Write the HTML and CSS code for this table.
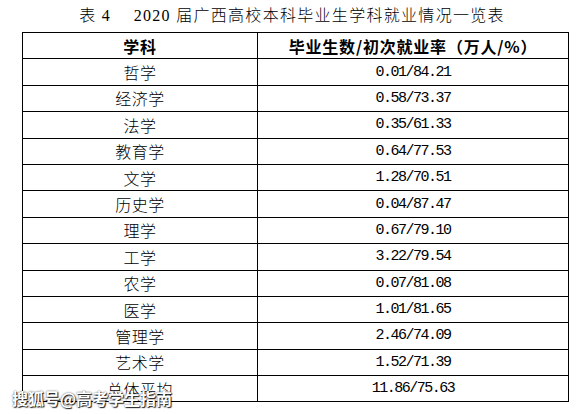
FILE: index.html
```html
<!DOCTYPE html>
<html lang="zh-CN">
<head>
  <meta charset="UTF-8">
  <meta name="viewport" content="width=device-width, initial-scale=1.0">
  <title>2020届广西高校本科毕业生学科就业情况一览表</title>
  <link rel="stylesheet" href="styles.css">
</head>
<body>
  <div class="page">
    <h1 class="title">表 4&emsp; 2020 届广西高校本科毕业生学科就业情况一览表</h1>

    <table class="grid">
      <tr class="head">
        <th class="subject">学科</th>
        <th>毕业生数/初次就业率（万人/%）</th>
      </tr>
      <tr><td class="subject">哲学</td><td class="num">0.01/84.21</td></tr>
      <tr><td class="subject">经济学</td><td class="num">0.58/73.37</td></tr>
      <tr><td class="subject">法学</td><td class="num">0.35/61.33</td></tr>
      <tr><td class="subject">教育学</td><td class="num">0.64/77.53</td></tr>
      <tr><td class="subject">文学</td><td class="num">1.28/70.51</td></tr>
      <tr><td class="subject">历史学</td><td class="num">0.04/87.47</td></tr>
      <tr><td class="subject">理学</td><td class="num">0.67/79.10</td></tr>
      <tr><td class="subject">工学</td><td class="num">3.22/79.54</td></tr>
      <tr><td class="subject">农学</td><td class="num">0.07/81.08</td></tr>
      <tr><td class="subject">医学</td><td class="num">1.01/81.65</td></tr>
      <tr><td class="subject">管理学</td><td class="num">2.46/74.09</td></tr>
      <tr><td class="subject">艺术学</td><td class="num">1.52/71.39</td></tr>
      <tr><td class="subject">总体平均</td><td class="num">11.86/75.63</td></tr>
    </table>

    <div class="watermark">搜狐号@高考学生指南</div>
  </div>
</body>
</html>
```

FILE: styles.css
```css
    body {
      margin: 0;
      background: #fff;
      color: #000;
      font-family: "Liberation Serif", "Noto Sans CJK SC", serif;
    }
    .page {
      position: relative;
      width: 584px;
      height: 414px;
      overflow: hidden;
    }
    .title {
      margin: 0;
      height: 32px;
      line-height: 31px;
      font-size: 16px;
      font-weight: 300;
      letter-spacing: 1.3px;
      text-align: center;
    }
    .grid {
      margin-left: 22px;
      width: 547px;
      border-collapse: collapse;
    }
    .grid th,
    .grid td {
      height: 26.4px;
      padding: 0;
      border: 1px solid #000;
      text-align: center;
      box-sizing: border-box;
    }
    .grid th {
      font-family: "Noto Sans CJK SC", sans-serif;
      font-size: 16px;
      font-weight: bold;
      letter-spacing: 0.8px;
    }
    .subject {
      width: 235px;
      font-family: "Noto Sans CJK SC", sans-serif;
      font-size: 16px;
      font-weight: 300;
      letter-spacing: 0.5px;
    }
    .num {
      padding-top: 2px;
      font-family: "Liberation Mono", monospace;
      font-size: 15px;
      letter-spacing: -1.5px;
    }
    /* 水印 */
    .watermark {
      position: absolute;
      left: 12px;
      top: 386px;
      font-family: "Noto Sans CJK SC", sans-serif;
      font-size: 16px;
      font-weight: bold;
      color: #fff;
      text-shadow: 1px 1px 1px rgba(0, 0, 0, .85), 0 0 2px rgba(0, 0, 0, .7);
    }
```
